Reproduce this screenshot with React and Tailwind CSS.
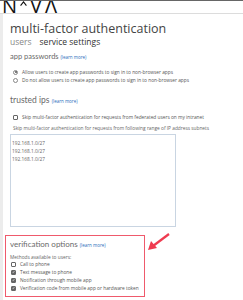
export default function App() {
  const methods = [
    { label: 'Call to phone', checked: false },
    { label: 'Text message to phone', checked: true },
    { label: 'Notification through mobile app', checked: true },
    { label: 'Verification code from mobile app or hardware token', checked: true },
  ];

  const Check = ({ checked }) => (
    <span
      className={`inline-flex shrink-0 items-center justify-center w-[5px] h-[5px] border border-[#666] rounded-[1px] ${checked ? 'bg-[#666]' : 'bg-white'}`}
    >
      {checked && (
        <svg viewBox="0 0 10 10" className="w-[4px] h-[4px]">
          <path d="M2 5l2 2 4-5" fill="none" stroke="#fff" strokeWidth="2" />
        </svg>
      )}
    </span>
  );

  return (
    <div className="w-[243px] h-[300px] overflow-hidden bg-white relative" style={{ fontFamily: '"Open Sans", sans-serif' }}>
      <div className="h-[14px] border-b border-[#dcdcdc] border-t border-t-[#666] flex items-end pl-[2px] overflow-hidden">
        <div className="flex items-end gap-[3px] text-[20px] leading-[16px] text-[#111] font-normal -mb-[1px]">
          <span>N</span>
          <svg viewBox="0 0 8 6" className="w-[7px] h-[5px] mb-[8px]">
            <path d="M0.5 5.5L4 1L7.5 5.5" fill="none" stroke="#111" strokeWidth="1.3" />
          </svg>
          <span>V</span>
          <span>Λ</span>
        </div>
      </div>

      <div className="flex h-[286px]">
        <div className="w-[3px] bg-[#ececec]" />
        <div className="flex-1 pl-[7px] pt-[7px]">
          <h1 className="text-[12.5px] leading-[15px] text-[#444]">multi-factor authentication</h1>
          <div className="flex gap-[8px] text-[8.5px] leading-[10px] mt-[1px]">
            <span className="text-[#888]">users</span>
            <span className="text-[#333]">service settings</span>
          </div>

          <div className="mt-[5px] text-[7.5px] leading-[9px] text-[#6a6a6a] font-['Lato',sans-serif]">
            app passwords <span className="text-[4.5px] text-[#2a6ebb] font-['Open_Sans',sans-serif]">(learn more)</span>
          </div>
          <div className="mt-[7px] pl-[3px] flex flex-col gap-[2px] text-[4.8px] leading-[6px] text-[#555]">
            <label className="flex items-center gap-[4px]">
              <span className="w-[5px] h-[5px] rounded-full border border-[#888] flex items-center justify-center">
                <span className="w-[2px] h-[2px] rounded-full bg-[#555]" />
              </span>
              Allow users to create app passwords to sign in to non-browser apps
            </label>
            <label className="flex items-center gap-[4px]">
              <span className="w-[5px] h-[5px] rounded-full border border-[#888]" />
              Do not allow users to create app passwords to sign in to non-browser apps
            </label>
          </div>

          <div className="mt-[12px] text-[8.5px] leading-[10px] text-[#6a6a6a] font-['Lato',sans-serif]">
            trusted ips <span className="text-[4.5px] text-[#2a6ebb] font-['Open_Sans',sans-serif]">(learn more)</span>
          </div>
          <label className="mt-[8px] pl-[3px] flex items-center gap-[4px] text-[4.8px] leading-[6px] text-[#555]">
            <Check checked={false} />
            Skip multi-factor authentication for requests from federated users on my intranet
          </label>
          <div className="mt-[5px] pl-[3px] text-[4.8px] leading-[6px] text-[#666]">
            Skip multi-factor authentication for requests from following range of IP address subnets
          </div>
          <div className="mt-[3px] w-[166px] h-[93px] border border-[#c9d5e2] px-[1px] pt-[4px] text-[4.8px] leading-[8px] text-[#666]">
            <div>192.168.1.0/27</div>
            <div>192.168.1.0/27</div>
            <div>192.168.1.0/27</div>
          </div>
        </div>
      </div>

      <div className="absolute left-[5px] top-[235px] w-[140px] h-[62px] border-[1.5px] border-[#ef5a6c] pl-[4px] pt-[3px]">
        <div className="text-[8px] leading-[10px] text-[#6a6a6a] font-['Lato',sans-serif]">
          verification options <span className="text-[4.5px] text-[#2a6ebb] font-['Open_Sans',sans-serif]">(learn more)</span>
        </div>
        <div className="mt-[4px] text-[4.8px] leading-[6px] text-[#666]">Methods available to users:</div>
        <div className="mt-[1px] pl-[1px] flex flex-col gap-[2px] text-[4.8px] leading-[6px] text-[#555]">
          {methods.map((m) => (
            <label key={m.label} className="flex items-center gap-[4px]">
              <Check checked={m.checked} />
              {m.label}
            </label>
          ))}
        </div>
      </div>

      <svg className="absolute left-[146px] top-[232px]" width="26" height="20" viewBox="0 0 26 20">
        <path d="M23 2L7 14" stroke="#ef3b50" strokeWidth="2.2" />
        <path d="M2 18L5 9L11 16Z" fill="#ef3b50" />
      </svg>
    </div>
  );
}
